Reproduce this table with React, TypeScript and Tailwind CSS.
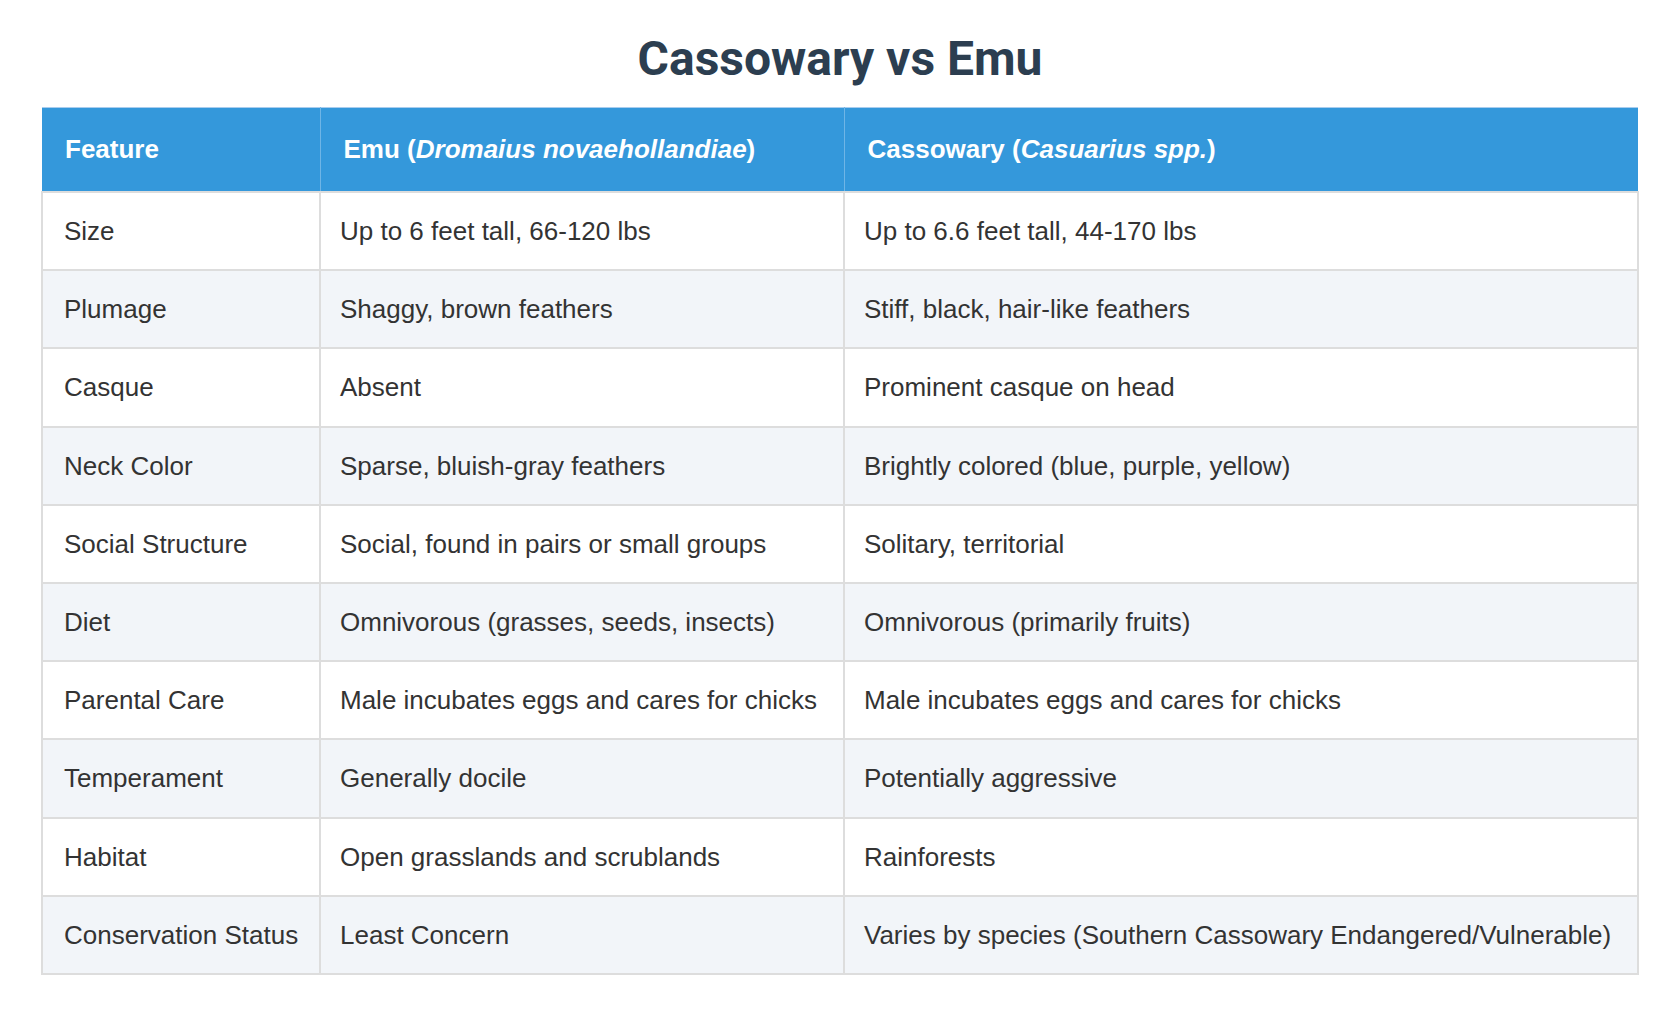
const rows: [string, string, string][] = [
  ["Size", "Up to 6 feet tall, 66-120 lbs", "Up to 6.6 feet tall, 44-170 lbs"],
  ["Plumage", "Shaggy, brown feathers", "Stiff, black, hair-like feathers"],
  ["Casque", "Absent", "Prominent casque on head"],
  ["Neck Color", "Sparse, bluish-gray feathers", "Brightly colored (blue, purple, yellow)"],
  ["Social Structure", "Social, found in pairs or small groups", "Solitary, territorial"],
  ["Diet", "Omnivorous (grasses, seeds, insects)", "Omnivorous (primarily fruits)"],
  ["Parental Care", "Male incubates eggs and cares for chicks", "Male incubates eggs and cares for chicks"],
  ["Temperament", "Generally docile", "Potentially aggressive"],
  ["Habitat", "Open grasslands and scrublands", "Rainforests"],
  ["Conservation Status", "Least Concern", "Varies by species (Southern Cassowary Endangered/Vulnerable)"],
];

export default function App() {
  return (
    <div className="w-full min-h-screen bg-white px-[41px] pt-[30px] [font-family:'Liberation_Sans',Arial,sans-serif] text-[#333]">
      {/* Title */}
      <h1 className="text-center text-[48px] leading-[57px] font-bold text-[#2c3e50] [font-family:Roboto,sans-serif] mb-[20px]">
        Cassowary vs Emu
      </h1>

      {/* Comparison table */}
      <table className="w-full border-collapse table-fixed text-[26px]">
        <colgroup>
          <col className="w-[278px]" />
          <col className="w-[524px]" />
          <col />
        </colgroup>
        <thead>
          <tr className="bg-[#3498db] text-white">
            <th className="text-left font-bold leading-[28px] pt-[27px] pb-[28px] pl-[23px] pr-4 border-t border-t-[#a9cdee] border-b-2 border-b-[#dddddd] border-r border-r-[#6fb5e6]">
              Feature
            </th>
            <th className="text-left font-bold leading-[28px] pt-[27px] pb-[28px] pl-[23px] pr-4 border-t border-t-[#a9cdee] border-b-2 border-b-[#dddddd] border-r border-r-[#6fb5e6]">
              Emu (<i>Dromaius novaehollandiae</i>)
            </th>
            <th className="text-left font-bold leading-[28px] pt-[27px] pb-[28px] pl-[23px] pr-4 border-t border-t-[#a9cdee] border-b-2 border-b-[#dddddd]">
              Cassowary (<i>Casuarius spp.</i>)
            </th>
          </tr>
        </thead>
        <tbody>
          {rows.map((r, i) => (
            <tr key={r[0]} className={i % 2 === 1 ? "bg-[#f2f5f9]" : "bg-white"}>
              {r.map((c, j) => (
                <td
                  key={j}
                  className={`border-2 border-[#dddddd] py-6 pr-3 leading-[28.2px] whitespace-nowrap ${j === 0 ? "pl-[21px]" : "pl-[19px]"}`}
                >
                  {c}
                </td>
              ))}
            </tr>
          ))}
        </tbody>
      </table>
    </div>
  );
}
